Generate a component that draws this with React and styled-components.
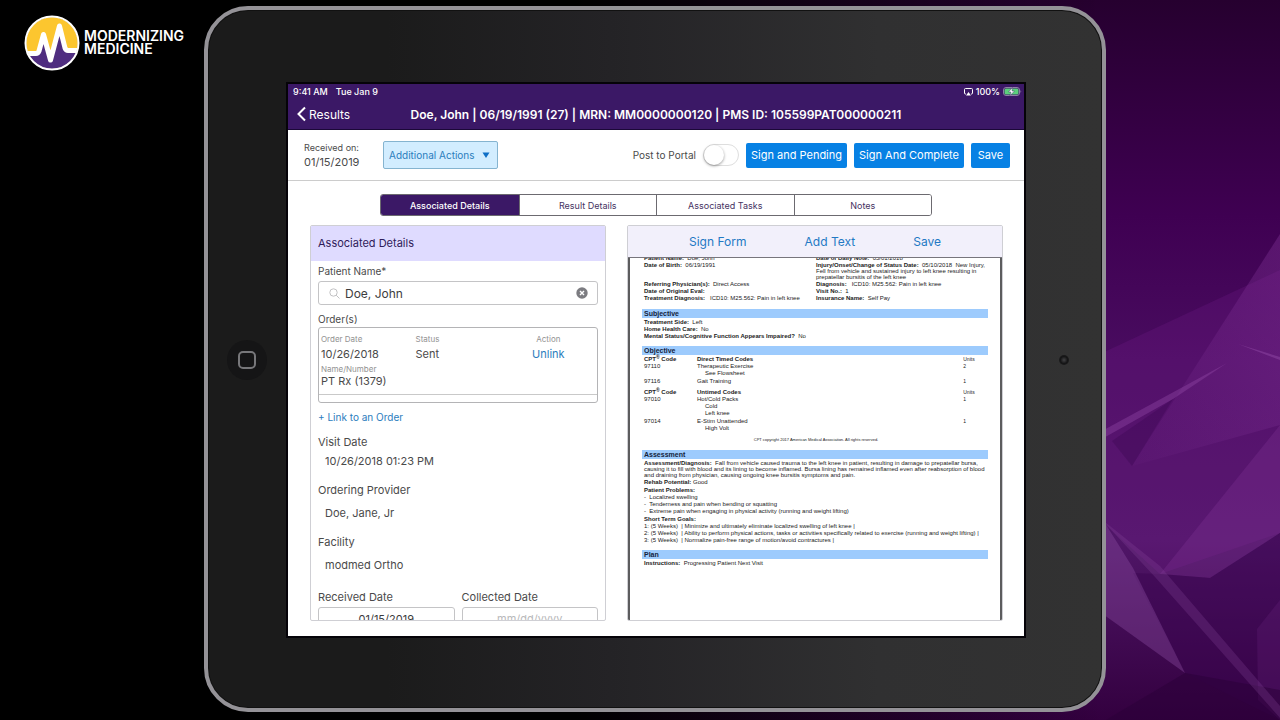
import React, { useState } from 'react';
import styled, { createGlobalStyle } from 'styled-components';

const GlobalStyle = createGlobalStyle`
	* {
		box-sizing: border-box;
	}
	body {
		margin: 0;
		background: #000;
		font-family: Inter, "Liberation Sans", sans-serif;
		color: #4a4a4a;
	}
	button, input, select {
		font-family: inherit;
		margin: 0;
	}
`;

const Page = styled.div`
	position: relative;
	display: grid;
	grid-template-columns: 204fr 902fr 174fr;
	min-height: 100vh;
	overflow: hidden;
	background: #000;
`;

const Backdrop = styled.svg`
	position: absolute;
	inset: 0;
	width: 100%;
	height: 100%;
`;

const Brand = styled.div`
	position: relative;
	display: flex;
	align-items: flex-start;
	gap: 3px;
	padding: 15px 0 0 24px;
`;

const BrandName = styled.div`
	padding-top: 14px;
	font-size: 14px;
	line-height: 13px;
	font-weight: 600;
	color: #fff;
`;

const Tablet = styled.div`
	position: relative;
	display: grid;
	grid-template-columns: 78px minmax(0, 1fr) 76px;
	align-items: center;
	justify-items: center;
	height: calc(100vh - 14px);
	min-height: 600px;
	margin: 6px 0 8px;
	padding: 72px 0 70px;
	border: 4px solid #949297;
	border-radius: 44px;
	background: linear-gradient(90deg, #1b1b1b 20%, #242326 45%, #303031 75%, #323232);
	box-shadow: inset 0 0 0 1px #111;
`;

const HomeButton = styled.button`
	display: flex;
	align-items: center;
	justify-content: center;
	width: 40px;
	height: 40px;
	padding: 0;
	border: 0;
	border-radius: 50%;
	background: #151516;
`;

const HomeMark = styled.span`
	width: 18px;
	height: 18px;
	border: 2px solid #77777a;
	border-radius: 5px;
`;

const Camera = styled.div`
	width: 10px;
	height: 10px;
	border-radius: 50%;
	background: radial-gradient(circle, #3a3a3c 10%, #151516 50%, #222 100%);
`;

const Screen = styled.div`
	display: flex;
	flex-direction: column;
	align-self: stretch;
	justify-self: stretch;
	min-height: 0;
	border: 2px solid #050308;
	background: #fff;
	overflow: hidden;
`;

const Header = styled.header`
	flex: none;
	background: #3b1866;
	border-bottom: 1px solid #1b0838;
	color: #fff;
`;

const StatusBar = styled.div`
	display: flex;
	align-items: center;
	justify-content: space-between;
	height: 15px;
	padding: 0 2px 0 5px;
	font-size: 9px;
	font-weight: 500;
`;

const StatusGroup = styled.div`
	display: flex;
	align-items: center;
	gap: ${props => props.$gap};
`;

const NavBar = styled.div`
	display: grid;
	grid-template-columns: 1fr auto 1fr;
	align-items: center;
	height: 30px;
	padding: 0 9px;
`;

const BackLink = styled.a`
	display: flex;
	align-items: center;
	gap: 3px;
	font-size: 12px;
	color: #fff;
	text-decoration: none;
`;

const Title = styled.h1`
	margin: 0;
	font-size: 12px;
	font-weight: 600;
	white-space: nowrap;
`;

const Toolbar = styled.div`
	flex: none;
	display: flex;
	align-items: center;
	gap: 7px;
	height: 51px;
	padding: 0 14px 0 16px;
	border-bottom: 1px solid #ccc;
`;

const Received = styled.div`
	width: 72px;
	font-size: 9px;
	line-height: 14px;
`;

const ReceivedDate = styled.div`
	font-size: 11px;
`;

const ActionPicker = styled.div`
	display: grid;
	align-items: center;
	margin-right: auto;
	> * {
		grid-area: 1 / 1;
	}
	> svg {
		justify-self: end;
		margin-right: 8px;
		pointer-events: none;
	}
`;

const ActionSelect = styled.select`
	appearance: none;
	width: 115px;
	height: 28px;
	padding: 0 5px;
	border: 1px solid #85b4d0;
	border-radius: 2px;
	background: #d2edff;
	color: #2b7dbd;
	font-size: 10px;
`;

const SwitchLabel = styled.label`
	display: flex;
	align-items: center;
	gap: 7px;
	font-size: 10px;
`;

const Switch = styled.input`
	appearance: none;
	width: 36px;
	height: 22px;
	border: 1px solid #dedede;
	border-radius: 11px;
	background: ${props => props.checked ? '#4cd964' : '#fff'};
	&::before {
		content: "";
		display: block;
		width: 20px;
		height: 20px;
		margin-left: ${props => props.checked ? '14px' : '0'};
		border-radius: 50%;
		background: #fff;
		box-shadow: 0 1px 3px rgba(0, 0, 0, 0.4);
	}
`;

const Button = styled.button`
	min-width: 39px;
	height: 25px;
	padding: 0 5px;
	border: 0;
	border-radius: 2px;
	background: #0781e4;
	color: #fff;
	font-size: 11px;
	white-space: nowrap;
`;

const Tabs = styled.div`
	flex: none;
	display: grid;
	grid-template-columns: repeat(4, 1fr);
	width: 75%;
	height: 22px;
	margin: 13px auto 9px;
	border: 1px solid #6c6a70;
	border-radius: 3px;
	overflow: hidden;
`;

const Tab = styled.button`
	padding: 0;
	border: 0;
	border-left: ${props => props.$first ? '0' : '1px solid #6c6a70'};
	background: ${props => props.$active ? '#3b1866' : '#fff'};
	color: ${props => props.$active ? '#fff' : '#46325f'};
	font-size: 9px;
	font-weight: ${props => props.$active ? 500 : 400};
`;

const Panels = styled.div`
	flex: 1;
	display: grid;
	grid-template-columns: 296fr 376fr;
	grid-template-rows: minmax(0, 1fr);
	gap: 21px;
	min-height: 0;
	padding: 0 21px 15px 22px;
`;

const Panel = styled.section`
	display: flex;
	flex-direction: column;
	min-width: 0;
	border: 1px solid #cfcfd4;
	border-radius: 2px;
	overflow: hidden;
`;

const PanelTitle = styled.h2`
	flex: none;
	margin: 0;
	padding-left: 7px;
	background: #dfdbff;
	color: #2f1c5a;
	font-size: 11px;
	font-weight: 400;
	line-height: 35px;
`;

const PanelBody = styled.div`
	display: flex;
	flex-direction: column;
	padding: 3px 7px 0;
`;

const Field = styled.div`
	display: flex;
	flex-direction: column;
	gap: ${props => props.$gap};
	margin-bottom: ${props => props.$after};
	font-size: ${props => props.$small ? '10px' : '11px'};
	line-height: 14px;
`;

const FieldValue = styled.div`
	padding-left: 7px;
`;

const SearchBox = styled.div`
	display: flex;
	align-items: center;
	gap: 5px;
	height: 24px;
	padding: 0 9px 0 10px;
	border: 1px solid #c4c4c6;
	border-radius: 3px;
`;

const SearchInput = styled.input`
	flex: 1;
	min-width: 0;
	padding: 0;
	border: 0;
	background: none;
	color: #3c3c3e;
	font-size: 12px;
`;

const ClearButton = styled.button`
	display: flex;
	padding: 0;
	border: 0;
	background: none;
`;

const OrderBox = styled.div`
	height: 76px;
	border: 1px solid #b4b4b6;
	border-radius: 3px;
`;

const OrderTable = styled.table`
	width: 100%;
	border-spacing: 0;
	border-bottom: 1px solid #c9c9c9;
	table-layout: fixed;
	font-size: 11px;
	td, th {
		padding: 0 0 0 2px;
		text-align: left;
		font-weight: 400;
		line-height: 12px;
	}
	th {
		color: #929292;
		font-size: 8px;
	}
	thead th {
		padding-top: 5px;
	}
	td {
		padding-top: 3px;
		padding-bottom: 3px;
	}
	tr:last-child td {
		padding-top: 0;
		padding-bottom: 7px;
	}
	th:nth-child(3), td:nth-child(3) {
		padding-left: 0;
		text-align: center;
	}
`;

const TextLink = styled.a`
	color: #2b7dbd;
	font-size: ${props => props.$small ? '10px' : '11px'};
	line-height: ${props => props.$small ? '14px' : '12px'};
	text-decoration: none;
	margin-bottom: ${props => props.$after || '0'};
`;

const DateRow = styled.div`
	display: grid;
	grid-template-columns: 1fr 1fr;
	gap: 7px;
`;

const DateInput = styled.input`
	width: 100%;
	height: 24px;
	padding: 0;
	border: 1px solid #c4c4c6;
	border-radius: 3px;
	color: #3c3c3e;
	font-size: 11px;
	text-align: center;
	&::placeholder {
		color: #b9b9bb;
	}
`;

const FormBar = styled.div`
	flex: none;
	display: flex;
	justify-content: space-between;
	height: 32px;
	padding: 0 61px;
	background: #f2f0fb;
	border-bottom: 1px solid #77757c;
`;

const FormButton = styled.button`
	padding: 0;
	border: 0;
	background: none;
	color: #2379c4;
	font-size: 12px;
`;

const Paper = styled.div`
	flex: 1;
	min-height: 0;
	overflow: hidden;
	padding: 0 12px;
	border: solid #5c5c5e;
	border-width: 0 2px;
	background: #fff;
	color: #222;
	font-family: "Liberation Sans", Arial, sans-serif;
	font-size: 6px;
	line-height: 6px;
`;

const Sheet = styled.div`
	margin-top: -3px;
`;

const Facts = styled.div`
	display: grid;
	grid-template-columns: 1fr 1fr;
	padding-left: 2px;
	margin-bottom: 7px;
`;

const Line = styled.div`
	margin-bottom: 1px;
	white-space: pre-wrap;
`;

const Detail = styled.div`
	margin: 1px 0 1px 8px;
`;

const Band = styled.h3`
	margin: 0 0 1px;
	padding-left: 2px;
	background: #9dcbfd;
	color: #14233c;
	font-size: 7px;
	line-height: 9px;
`;

const Section = styled.div`
	padding-left: 2px;
	margin-bottom: 7px;
`;

const Group = styled.div`
	margin-top: 2px;
`;

const Codes = styled.table`
	width: 100%;
	margin: 1px 0 4px;
	border-collapse: collapse;
	table-layout: fixed;
	th, td {
		padding: 0 0 1px;
		text-align: left;
		vertical-align: top;
	}
	sup {
		font-size: 5px;
		line-height: 0;
		vertical-align: 2px;
	}
	th:nth-child(3), td:nth-child(3) {
		font-size: 5px;
		font-weight: 400;
	}
`;

const Fineprint = styled.div`
	margin: 4px 0 5px;
	text-align: center;
	font-size: 4px;
`;

const Logo = () => (
	<svg width="57" height="57" viewBox="0 0 57 57" aria-hidden="true">
		<defs>
			<clipPath id="disc"><circle cx="28" cy="28" r="26" /></clipPath>
		</defs>
		<g clipPath="url(#disc)">
			<rect width="57" height="57" fill="#fcc62f" />
			<path d="M0 38 L12 38 L19 20 L26 45 L36 11 L43 35 L57 35 L57 57 L0 57 Z" fill="#4f2d80" />
			<path d="M0 38.500 H12 Q14 38.500 15 36 L19.500 19.500 L26.500 45 L35.500 11 L41 33 Q42 35.500 44 35.500 H57" fill="none" stroke="#fff" strokeWidth="5" strokeLinejoin="round" />
		</g>
		<circle cx="28" cy="28" r="26.500" fill="none" stroke="#fff" strokeWidth="2" />
	</svg>
);

const Shards = () => (
	<Backdrop viewBox="0 0 1280 720" preserveAspectRatio="xMaxYMid slice" aria-hidden="true">
		<defs>
			<linearGradient id="dusk" x1="0" y1="0" x2="0" y2="1">
				<stop offset="0" stopColor="#26002f" />
				<stop offset="0.3" stopColor="#3f0052" />
				<stop offset="0.5" stopColor="#490c60" />
				<stop offset="0.75" stopColor="#501668" />
				<stop offset="1" stopColor="#33003f" />
			</linearGradient>
			<linearGradient id="shade" x1="0" y1="0" x2="1" y2="0">
				<stop offset="0.45" stopColor="#000" />
				<stop offset="0.86" stopColor="#000" stopOpacity="0" />
			</linearGradient>
			<linearGradient id="glow" x1="0" y1="1" x2="1" y2="0">
				<stop offset="0" stopColor="#8a3aa0" stopOpacity="0.05" />
				<stop offset="1" stopColor="#8a3aa0" stopOpacity="0.35" />
			</linearGradient>
		</defs>
		<rect width="1280" height="720" fill="url(#dusk)" />
		<rect width="1280" height="720" fill="url(#shade)" />
		<polygon points="1100,354 1280,270 1280,533 1160,574 1100,520" fill="#7a2090" opacity="0.22" />
		<polygon points="1280,234 1132,466 1280,425" fill="url(#glow)" />
		<polygon points="1100,432 1227,363 1173,399 1100,440" fill="#9a4fb0" opacity="0.35" />
		<polygon points="1112,441 1173,399 1132,466" fill="#3a0550" opacity="0.35" />
		<polygon points="1238,344 1280,357 1280,360" fill="#a35cb8" opacity="0.35" />
		<polygon points="1280,425 1160,574 1210,578 1280,533" fill="#8a3aa0" opacity="0.25" />
		<polygon points="1133,573 1160,574 1210,578 1280,533 1280,720 1185,673" fill="#3a0550" opacity="0.45" />
		<polygon points="1257,629 1280,600 1280,720 1258,700" fill="#7a2f8a" opacity="0.2" />
		<polygon points="1100,515 1133,568 1185,673 1100,612" fill="#8a4aa0" opacity="0.4" />
		<polygon points="1185,673 1280,690 1280,720 1106,720" fill="#2a0038" opacity="0.5" />
		<polygon points="1100,518 1160,566 1280,706 1280,718 1155,577" fill="#8a4aa0" opacity="0.25" />
	</Backdrop>
);

const Fact = ({ label, children }) => (
	<Line><b>{label}</b>{'  '}{children}</Line>
);

const CodeTable = ({ heading, rows }) => (
	<Codes>
		<colgroup>
			<col style={{ width: '15.4%' }} />
			<col />
			<col style={{ width: '7.2%' }} />
		</colgroup>
		<thead>
			<tr>
				<th>CPT<sup>®</sup> Code</th>
				<th>{heading}</th>
				<th>Units</th>
			</tr>
		</thead>
		<tbody>
			{rows.map(row => (
				<tr key={row.code}>
					<td>{row.code}</td>
					<td>
						{row.name}
						{row.details.map(detail => <Detail key={detail}>{detail}</Detail>)}
					</td>
					<td>{row.units}</td>
				</tr>
			))}
		</tbody>
	</Codes>
);

const timedCodes = [
	{ code: '97110', name: 'Therapeutic Exercise', details: ['See Flowsheet'], units: 2 },
	{ code: '97116', name: 'Gait Training', details: [], units: 1 },
];

const untimedCodes = [
	{ code: '97010', name: 'Hot/Cold Packs', details: ['Cold', 'Left knee'], units: 1 },
	{ code: '97014', name: 'E-Stim Unattended', details: ['High Volt'], units: 1 },
];

const tabs = ['Associated Details', 'Result Details', 'Associated Tasks', 'Notes'];

const App = () => {
	const [tab, setTab] = useState(tabs[0]);
	const [portal, setPortal] = useState(false);
	const [patient, setPatient] = useState('Doe, John');

	return (
		<>
			<GlobalStyle />
			<Page>
				<Shards />
				<Brand>
					<Logo />
					<BrandName>MODERNIZING<br />MEDICINE</BrandName>
				</Brand>
				<Tablet>
					<HomeButton aria-label="Home"><HomeMark /></HomeButton>
					<Screen>
						<Header>
							<StatusBar>
								<StatusGroup $gap="8px">
									<span>9:41 AM</span>
									<span>Tue Jan 9</span>
								</StatusGroup>
								<StatusGroup $gap="3px">
									<svg width="9" height="8" viewBox="0 0 9 8" aria-hidden="true">
										<path d="M2 6 H1.5 Q0.5 6 0.5 5 V1.5 Q0.5 0.5 1.5 0.5 H7.5 Q8.5 0.5 8.5 1.5 V5 Q8.5 6 7.5 6 H7" fill="none" stroke="#fff" />
										<path d="M4.5 4 L7 7.5 H2 Z" fill="#fff" />
									</svg>
									<span>100%</span>
									<svg width="19" height="9" viewBox="0 0 19 9" aria-hidden="true">
										<rect x="0.5" y="0.5" width="16" height="8" rx="2.5" fill="none" stroke="#8f7fa6" />
										<rect x="1.5" y="1.5" width="14" height="6" rx="1.5" fill="#5bd07c" />
										<path d="M9.5 0.5 L5.5 5 H8 L7 8.5 L11.5 4 H9 Z" fill="#fff" stroke="#3b1866" strokeWidth="0.4" />
										<path d="M17.5 3 Q19 4.500 17.5 6 Z" fill="#8f7fa6" />
									</svg>
								</StatusGroup>
							</StatusBar>
							<NavBar>
								<BackLink href="#results">
									<svg width="9" height="16" viewBox="0 0 9 16" aria-hidden="true">
										<path d="M8 1.500 L1.500 8 L8 14.500" fill="none" stroke="#fff" strokeWidth="2" />
									</svg>
									Results
								</BackLink>
								<Title>Doe, John | 06/19/1991 (27) | MRN: MM0000000120 | PMS ID: 105599PAT000000211</Title>
							</NavBar>
						</Header>

						<Toolbar>
							<Received>
								Received on:
								<ReceivedDate>01/15/2019</ReceivedDate>
							</Received>
							<ActionPicker>
								<ActionSelect aria-label="Additional Actions">
									<option>Additional Actions</option>
								</ActionSelect>
								<svg width="8" height="6" viewBox="0 0 8 6" aria-hidden="true">
									<path d="M0.500 0.500 H7.500 L4 6 Z" fill="#0f6fc6" />
								</svg>
							</ActionPicker>
							<SwitchLabel>
								Post to Portal
								<Switch type="checkbox" role="switch" checked={portal} onChange={e => setPortal(e.target.checked)} />
							</SwitchLabel>
							<Button>Sign and Pending</Button>
							<Button>Sign And Complete</Button>
							<Button>Save</Button>
						</Toolbar>

						<Tabs role="tablist">
							{tabs.map((name, i) => (
								<Tab key={name} role="tab" aria-selected={tab === name} $first={i === 0} $active={tab === name} onClick={() => setTab(name)}>
									{name}
								</Tab>
							))}
						</Tabs>

						<Panels>
							<Panel>
								<PanelTitle>Associated Details</PanelTitle>
								<PanelBody>
									<Field $small $gap="3px" $after="7px">
										<label htmlFor="patient">Patient Name*</label>
										<SearchBox>
											<svg width="11" height="11" viewBox="0 0 11 11" aria-hidden="true">
												<circle cx="4.500" cy="4.500" r="3.700" fill="none" stroke="#c2c2c4" />
												<path d="M7.200 7.200 L10.500 10.500" stroke="#c2c2c4" />
											</svg>
											<SearchInput id="patient" value={patient} onChange={e => setPatient(e.target.value)} />
											<ClearButton aria-label="Clear" onClick={() => setPatient('')}>
												<svg width="12" height="12" viewBox="0 0 12 12" aria-hidden="true">
													<circle cx="6" cy="6" r="5.700" fill="#7c7c81" />
													<path d="M4 4 L8 8 M8 4 L4 8" stroke="#fff" strokeWidth="1.400" />
												</svg>
											</ClearButton>
										</SearchBox>
									</Field>
									<Field $small $gap="1px" $after="7px">
										<span>Order(s)</span>
										<OrderBox>
											<OrderTable>
												<colgroup>
													<col style={{ width: '34%' }} />
													<col style={{ width: '31%' }} />
													<col style={{ width: '35%' }} />
												</colgroup>
												<thead>
													<tr><th>Order Date</th><th>Status</th><th>Action</th></tr>
												</thead>
												<tbody>
													<tr>
														<td>10/26/2018</td>
														<td>Sent</td>
														<td><TextLink href="#unlink">Unlink</TextLink></td>
													</tr>
													<tr><th>Name/Number</th></tr>
													<tr><td>PT Rx (1379)</td></tr>
												</tbody>
											</OrderTable>
										</OrderBox>
									</Field>
									<TextLink href="#link" $small $after="11px">+ Link to an Order</TextLink>
									<Field $gap="5px" $after="15px">
										<span>Visit Date</span>
										<FieldValue>10/26/2018 01:23 PM</FieldValue>
									</Field>
									<Field $gap="9px" $after="15px">
										<span>Ordering Provider</span>
										<FieldValue>Doe, Jane, Jr</FieldValue>
									</Field>
									<Field $gap="9px" $after="18px">
										<span>Facility</span>
										<FieldValue>modmed Ortho</FieldValue>
									</Field>
									<DateRow>
										<Field $gap="3px">
											<label htmlFor="received">Received Date</label>
											<DateInput id="received" defaultValue="01/15/2019" />
										</Field>
										<Field $gap="3px">
											<label htmlFor="collected">Collected Date</label>
											<DateInput id="collected" placeholder="mm/dd/yyyy" />
										</Field>
									</DateRow>
								</PanelBody>
							</Panel>

							<Panel>
								<FormBar>
									<FormButton>Sign Form</FormButton>
									<FormButton>Add Text</FormButton>
									<FormButton>Save</FormButton>
								</FormBar>
								<Paper>
									<Sheet>
										<Facts>
											<Fact label="Patient Name:">Doe, John</Fact>
											<Fact label="Date of Daily Note:">05/01/2018</Fact>
											<Fact label="Date of Birth:">06/19/1991</Fact>
											<Fact label="Injury/Onset/Change of Status Date:">05/10/2018  New Injury, Fell from vehicle and sustained injury to left knee resulting in prepatellar bursitis of the left knee</Fact>
											<Fact label="Referring Physician(s):">Direct Access</Fact>
											<Fact label="Diagnosis:"> ICD10: M25.562: Pain in left knee</Fact>
											<Fact label="Date of Original Eval:" />
											<Fact label="Visit No.:">1</Fact>
											<Fact label="Treatment Diagnosis:"> ICD10: M25.562: Pain in left knee</Fact>
											<Fact label="Insurance Name:">Self Pay</Fact>
										</Facts>

										<Band>Subjective</Band>
										<Section>
											<Fact label="Treatment Side:">Left</Fact>
											<Fact label="Home Health Care:">No</Fact>
											<Fact label="Mental Status/Cognitive Function Appears Impaired?">No</Fact>
										</Section>

										<Band>Objective</Band>
										<Section>
											<CodeTable heading="Direct Timed Codes" rows={timedCodes} />
											<CodeTable heading="Untimed Codes" rows={untimedCodes} />
											<Fineprint>CPT copyright 2017 American Medical Association.  All rights reserved.</Fineprint>
										</Section>

										<Band>Assessment</Band>
										<Section>
											<Fact label="Assessment/Diagnosis:">Fall from vehicle caused trauma to the left knee in patient, resulting in damage to prepatellar bursa, causing it to fill with blood and its lining to become inflamed. Bursa lining has remained inflamed even after reabsorption of blood and draining from physician, causing ongoing knee bursitis symptoms and pain.</Fact>
											<Line><b>Rehab Potential:</b> Good</Line>
											<Group>
												<Line><b>Patient Problems:</b></Line>
												<Line>-  Localized swelling</Line>
												<Line>-  Tenderness and pain when bending or squatting</Line>
												<Line>-  Extreme pain when engaging in physical activity (running and weight lifting)</Line>
											</Group>
											<Group>
												<Line><b>Short Term Goals:</b></Line>
												<Line>1: (5 Weeks)  | Minimize and ultimately eliminate localized swelling of left knee |</Line>
												<Line>2: (5 Weeks)  | Ability to perform physical actions, tasks or activities specifically related to exercise (running and weight lifting) |</Line>
												<Line>3: (5 Weeks)  | Normalize pain-free range of motion/avoid contractures |</Line>
											</Group>
										</Section>

										<Band>Plan</Band>
										<Section>
											<Fact label="Instructions:">Progressing Patient Next Visit</Fact>
										</Section>
									</Sheet>
								</Paper>
							</Panel>
						</Panels>
					</Screen>
					<Camera />
				</Tablet>
			</Page>
		</>
	);
};

export default App;
